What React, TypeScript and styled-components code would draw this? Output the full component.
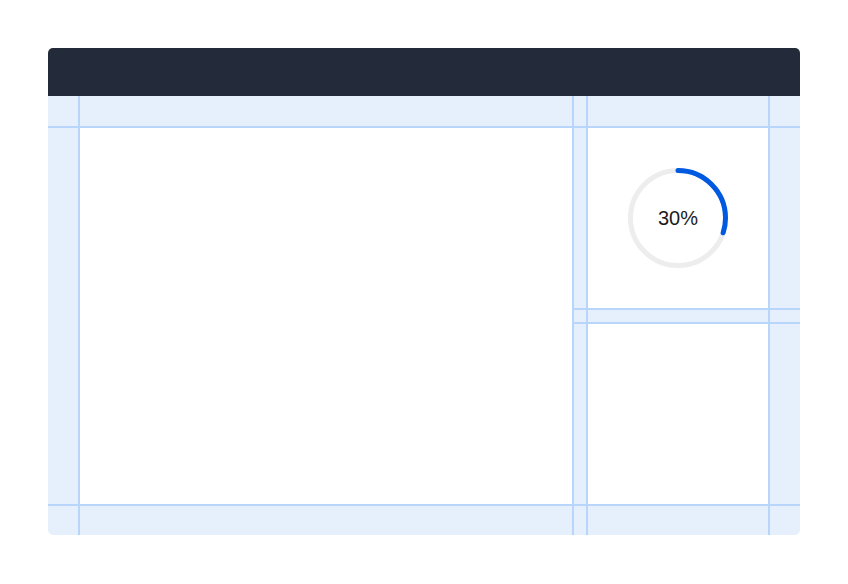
import styled, { createGlobalStyle } from "styled-components";

const GlobalStyle = createGlobalStyle`
  html, body {
    margin: 0;
    padding: 0;
    background: #ffffff;
    font-family: "Liberation Sans", Arial, sans-serif;
  }
`

const Page = styled.div`
  width: 848px;
  height: 584px;
  padding: 48px;
  box-sizing: border-box;
`

const Frame = styled.div`
  width: 752px;
  border-radius: 5px;
  overflow: hidden;
  display: flex;
  flex-direction: column;
`

const TopBar = styled.div`
  height: 48px;
  background: #232a39;
`

// columns: pad | line | main | line | gap | line | side | line | pad
const Layout = styled.div`
  display: grid;
  grid-template-columns: 30px 2px 492px 2px 12px 2px 180px 2px 30px;
  grid-template-rows: 30px 2px 180px 2px 12px 2px 180px 2px 29px;
  background: #e6f0fd;
`

const GuideV = styled.div<{ $col: number }>`
  grid-column: ${(p) => p.$col};
  grid-row: 1 / -1;
  background: #b8d5fc;
  z-index: 1;
`

const GuideH = styled.div<{ $row: number; $from?: number }>`
  grid-row: ${(p) => p.$row};
  grid-column: ${(p) => p.$from ?? 1} / -1;
  background: #b8d5fc;
  z-index: 1;
`

const Panel = styled.div<{ $col: string; $row: string }>`
  grid-column: ${(p) => p.$col};
  grid-row: ${(p) => p.$row};
  background: #ffffff;
  display: flex;
  align-items: center;
  justify-content: center;
`

const RingWrap = styled.div`
  width: 100px;
  height: 100px;
  display: grid;
  place-items: center;

  & > * {
    grid-area: 1 / 1;
  }
`

const Percent = styled.span`
  font-size: 20px;
  color: #1b1b1b;
`

function ProgressRing({ value }: { value: number }) {
  const r = 47.5
  const c = 2 * Math.PI * r
  return (
    <RingWrap>
      <svg width="100" height="100" viewBox="0 0 100 100">
        <circle cx="50" cy="50" r={r} fill="none" stroke="#ededed" strokeWidth="5" />
        <circle
          cx="50"
          cy="50"
          r={r}
          fill="none"
          stroke="#0059e1"
          strokeWidth="5"
          strokeLinecap="round"
          strokeDasharray={`${(c * value) / 100} ${c}`}
          transform="rotate(-90 50 50)"
        />
      </svg>
      <Percent>{value}%</Percent>
    </RingWrap>
  )
}

export default function App() {
  return (
    <>
      <GlobalStyle />
      <Page>
        <Frame>
          <TopBar />
          <Layout>
            <Panel $col="3" $row="3 / 8" />
            <Panel $col="7" $row="3">
              <ProgressRing value={30} />
            </Panel>
            <Panel $col="7" $row="7" />

            <GuideV $col={2} />
            <GuideV $col={4} />
            <GuideV $col={6} />
            <GuideV $col={8} />
            <GuideH $row={2} />
            <GuideH $row={4} $from={4} />
            <GuideH $row={6} $from={4} />
            <GuideH $row={8} />
          </Layout>
        </Frame>
      </Page>
    </>
  )
}
